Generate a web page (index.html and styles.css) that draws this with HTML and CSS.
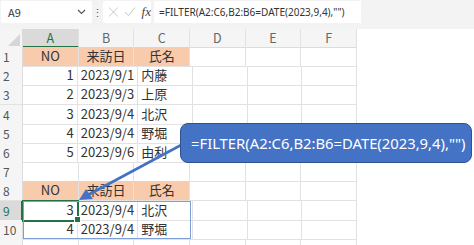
FILE: index.html
```html
<!doctype html>
<html>
<head>
<meta charset="utf-8">
<title>FILTER</title>
<link rel="stylesheet" href="styles.css">
</head>
<body>
<div class="bar">
	<div class="namebox"><span>A9</span><svg width="9" height="6" viewBox="0 0 9 6"><path d="M1 1l3.5 3.5L8 1" fill="none" stroke="#555" stroke-width="1.2"/></svg></div>
	<div class="dots">⋮</div>
	<div class="btns">
		<svg width="12" height="12" viewBox="0 0 12 12"><path d="M1 1l10 10M11 1L1 11" stroke="#c8c8c8" stroke-width="1.1"/></svg>
		<svg width="13" height="12" viewBox="0 0 13 12"><path d="M1 6l4 4 7-9" fill="none" stroke="#c8c8c8" stroke-width="1.1"/></svg>
		<span class="fx">fx</span>
	</div>
	<div class="formula">=FILTER(A2:C6,B2:B6=DATE(2023,9,4),"")</div>
</div>
<div class="sheet">
	<div class="row head">
		<div class="corner"><svg width="12" height="12" viewBox="0 0 12 12"><path d="M12 0v12H0z" fill="#d6d6d6"/></svg></div>
		<div class="col sel">A</div><div class="col">B</div><div class="col">C</div><div class="col">D</div><div class="col">E</div><div class="col">F</div>
	</div>
	<div class="row"><div class="num">1</div><div class="c hd">NO</div><div class="c hd">来訪日</div><div class="c hd">氏名</div><div class="c"></div><div class="c"></div><div class="c"></div></div>
	<div class="row"><div class="num">2</div><div class="c r">1</div><div class="c r">2023/9/1</div><div class="c">内藤</div><div class="c"></div><div class="c"></div><div class="c"></div></div>
	<div class="row"><div class="num">3</div><div class="c r">2</div><div class="c r">2023/9/3</div><div class="c">上原</div><div class="c"></div><div class="c"></div><div class="c"></div></div>
	<div class="row"><div class="num">4</div><div class="c r">3</div><div class="c r">2023/9/4</div><div class="c">北沢</div><div class="c"></div><div class="c"></div><div class="c"></div></div>
	<div class="row"><div class="num">5</div><div class="c r">4</div><div class="c r">2023/9/4</div><div class="c">野堀</div><div class="c"></div><div class="c"></div><div class="c"></div></div>
	<div class="row"><div class="num">6</div><div class="c r">5</div><div class="c r">2023/9/6</div><div class="c">由利</div><div class="c"></div><div class="c"></div><div class="c"></div></div>
	<div class="row"><div class="num">7</div><div class="c"></div><div class="c"></div><div class="c"></div><div class="c"></div><div class="c"></div><div class="c"></div></div>
	<div class="row"><div class="num">8</div><div class="c hd">NO</div><div class="c hd">来訪日</div><div class="c hd">氏名</div><div class="c"></div><div class="c"></div><div class="c"></div></div>
	<div class="row"><div class="num cur">9</div><div class="c r active">3</div><div class="c r">2023/9/4</div><div class="c">北沢</div><div class="c"></div><div class="c"></div><div class="c"></div></div>
	<div class="row"><div class="num">10</div><div class="c r">4</div><div class="c r">2023/9/4</div><div class="c">野堀</div><div class="c"></div><div class="c"></div><div class="c"></div></div>
	<div class="row"><div class="num"></div><div class="c"></div><div class="c"></div><div class="c"></div><div class="c"></div><div class="c"></div><div class="c"></div></div>
	<div class="spill"></div>
</div>
<svg class="arrow" width="474" height="245" viewBox="0 0 474 245">
	<path d="M183 144L88 195" stroke="#4472c4" stroke-width="2.6"/>
	<path d="M79 200L86 189L93 199z" fill="#4472c4"/>
</svg>
<div class="callout">=FILTER(A2:C6,B2:B6=DATE(2023,9,4),"")</div>
</body>
</html>
```

FILE: styles.css
```css
*{margin:0; padding:0; box-sizing:border-box;}
body{width:474px; height:245px; overflow:hidden; background:#fff; font-family:"Noto Sans CJK JP","Noto Sans",sans-serif; color:#333; position:relative;}

.bar{height:29px; background:#f3f3f3; display:flex; align-items:flex-start; padding:1px 0 0 1px; gap:0;}
.namebox{width:91px; height:22px; background:#fff; display:flex; align-items:center; justify-content:space-between; padding:0 6px 0 7px; font-size:11px; color:#333; border-radius:2px;}
.dots{width:11px; text-align:center; font-size:11px; line-height:22px; color:#555;}
.btns{width:48px; height:22px; background:#fff; display:flex; align-items:center; gap:5px; padding-left:5px; border-radius:2px;}
.fx{font-family:"Liberation Serif",serif; font-style:italic; font-size:13px; color:#444; margin-left:1px;}
.formula{width:207px; height:22px; margin-left:3px; background:#fff; font-family:"Noto Sans",sans-serif; font-size:10px; line-height:22px; padding-left:5px; color:#333; border-radius:2px 0 0 2px;}

.sheet{position:relative; width:357px; height:216px; overflow:hidden;}
.row{display:grid; grid-template-columns:23px repeat(6,1fr); height:19.2px;}
.row.head{height:18px; background:#f5f5f5;}
.corner{display:flex; align-items:flex-end; justify-content:flex-end; padding:0 2px 2px 0; border-right:1px solid #dcdcdc;}
.col{font-size:12.5px; line-height:17px; text-align:center; color:#666; border-right:1px solid #e2e2e2; border-bottom:1px solid #dcdcdc;}
.col.sel{background:#dadada; color:#217346; border-bottom:2px solid #217346;}
.num{background:#f5f5f5; font-size:12px; line-height:19px; color:#555; padding-left:3px; border-bottom:1px solid #e2e2e2; border-right:1px solid #dcdcdc;}
.num.cur{background:#dadada; color:#217346; border-right:2px solid #217346;}
.c{font-size:13px; line-height:18px; padding:0 3px; border-right:1px solid #e2e2e2; border-bottom:1px solid #e2e2e2; white-space:nowrap;}
.c.r{text-align:right;}
.c.hd{background:#f8cbad; text-align:center;}
.c.active{outline:2px solid #217346; outline-offset:-1px; position:relative;}
.c.active:after{content:""; position:absolute; right:-4px; bottom:-3px; width:5px; height:5px; background:#217346; border:1px solid #fff;}
.spill{position:absolute; left:23px; top:171.6px; width:168px; height:38.4px; border:1px solid #7e9fd6; pointer-events:none;}

.arrow{position:absolute; left:0; top:0;}
.callout{position:absolute; left:180px; top:123px; width:292px; height:40px; background:#4472c4; border:1px solid #2f528f; border-radius:8px; color:#fff; font-family:"Noto Sans",sans-serif; font-size:14.8px; line-height:38px; padding-left:10px; white-space:nowrap;}
```
